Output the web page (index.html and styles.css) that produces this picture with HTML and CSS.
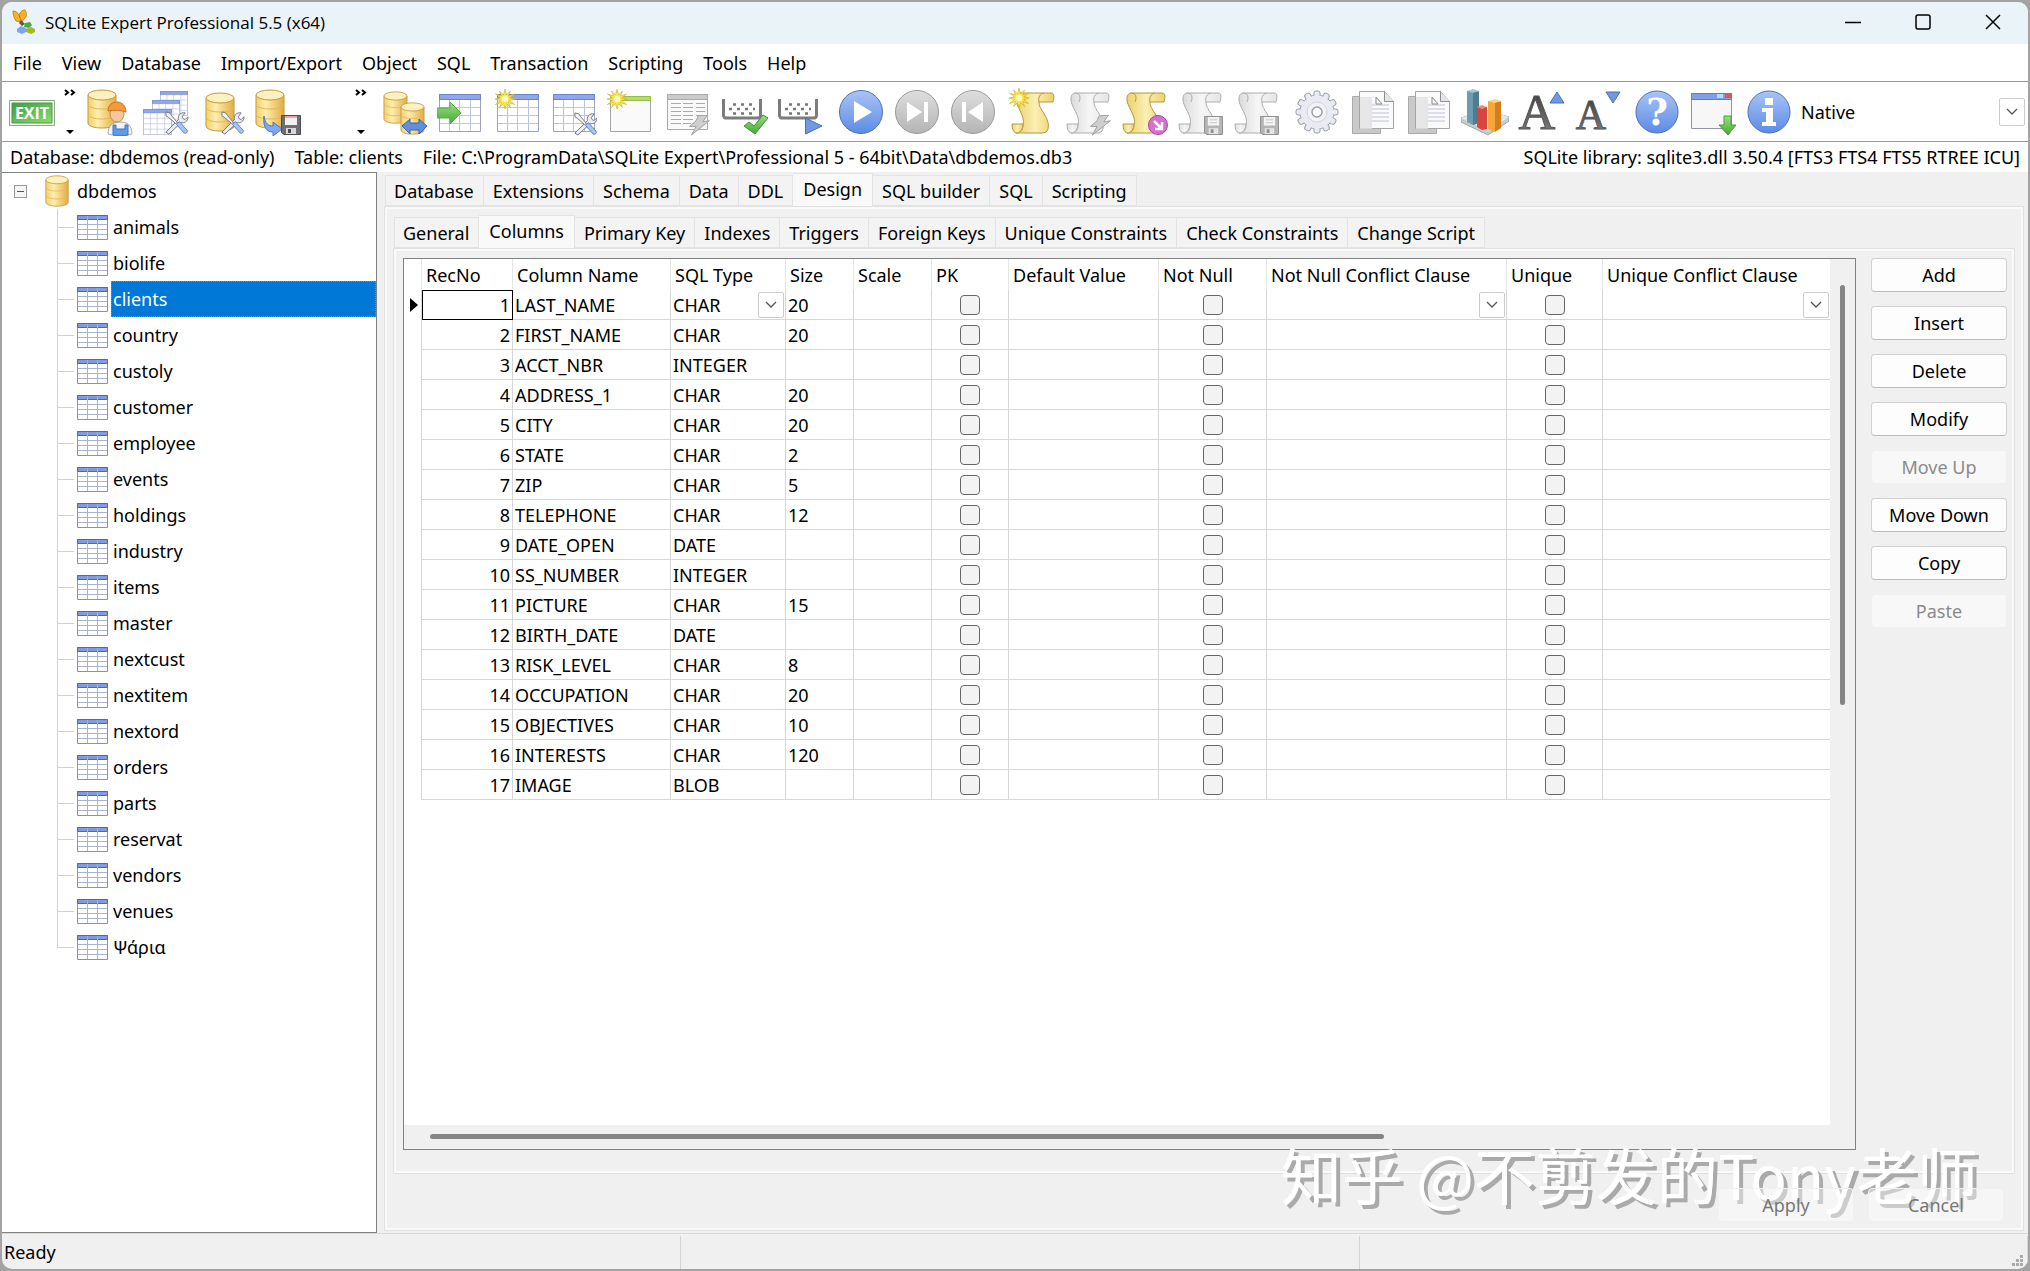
FILE: index.html
```html
<!DOCTYPE html>
<html lang="en">
<head>
    <meta charset="utf-8">
    <meta name="viewport" content="width=device-width, initial-scale=1">
    <title>SQLite Expert Professional 5.5 (x64)</title>
    <link rel="stylesheet" href="styles.css">
</head>
<body>
    <svg class="sprite" aria-hidden="true">
        <defs>
            <linearGradient id="gold"><stop offset="0" stop-color="#f3cf6b"/><stop offset=".35" stop-color="#fdeeb0"/><stop offset="1" stop-color="#e2ad3f"/></linearGradient>
            <linearGradient id="blue" x2="0" y2="1"><stop offset="0" stop-color="#a9c4f5"/><stop offset="1" stop-color="#5c8be6"/></linearGradient>
            <linearGradient id="gray" x2="0" y2="1"><stop offset="0" stop-color="#dedede"/><stop offset="1" stop-color="#b4b4b4"/></linearGradient>
            <linearGradient id="green" x2="0" y2="1"><stop offset="0" stop-color="#9be084"/><stop offset="1" stop-color="#46a835"/></linearGradient>
            <linearGradient id="exit" x2="1" y2="1"><stop offset="0" stop-color="#3f9d45"/><stop offset="1" stop-color="#8ddb70"/></linearGradient>
            <linearGradient id="paper"><stop offset="0" stop-color="#ecd068"/><stop offset=".5" stop-color="#fbf0b4"/><stop offset="1" stop-color="#edd168"/></linearGradient>
            <linearGradient id="paper-off"><stop offset="0" stop-color="#dcdcdc"/><stop offset=".5" stop-color="#f6f6f6"/><stop offset="1" stop-color="#e4e4e4"/></linearGradient>
            <linearGradient id="letter" x2="0" y2="1"><stop offset="0" stop-color="#333"/><stop offset="1" stop-color="#888"/></linearGradient>
        </defs>

        <!-- parts -->
        <symbol id="p-db" viewBox="0 0 30 40">
            <path d="M1 6v28c0 3 6 5 14 5s14-2 14-5V6z" fill="url(#gold)" stroke="#c4983f"/>
            <path d="M1 15c0 3 6 5 14 5s14-2 14-5M1 25c0 3 6 5 14 5s14-2 14-5" fill="none" stroke="#e3b95a"/>
            <ellipse cx="15" cy="6" rx="14" ry="5" fill="#fdf1c0" stroke="#c4983f"/>
        </symbol>
        <symbol id="p-table" viewBox="0 0 42 38">
            <path d="M.5.5h41v37H.5z" fill="#fff" stroke="#9ba3bd"/>
            <path d="M.5.5h41v5H.5z" fill="#8fa8ec" stroke="#6e83c4"/>
            <path d="M10.500 6v31M20.500 6v31M31.500 6v31M1 13.500h40M1 21.500h40M1 29.500h40" stroke="#bcc5e0"/>
        </symbol>
        <symbol id="p-tools" viewBox="0 0 26 26">
            <path d="M2 23l13-13c-1-4 2-8 7-7l-3 4 1 2 2 1 3-3c0 5-4 7-7 6L5 25z" fill="#e9ecf2" stroke="#71757f"/>
            <path d="M2 2l4 1 2 3 6 7-2 1-7-6-3-2z" fill="#f4f4f4" stroke="#71757f"/>
            <path d="M13 15l3-3 8 9c1 2-1 4-3 3z" fill="#a5c3f3" stroke="#5f80c0"/>
        </symbol>
        <symbol id="p-star" viewBox="0 0 20 20">
            <path d="M10 0l1.500 6 4-4-2 5 6-2-5 4 5.500 1-5.500 1.500 5 4-6-2 2 5-4-4L10 20l-1.500-5.500-4 4 2-5-6 2 5-4L0 10l5.500-1-5-4 6 2-2-5 4 4z" fill="#ffe94a" stroke="#d3b42d" stroke-width=".7"/>
            <circle cx="10" cy="10" r="3" fill="#fffbd0"/>
        </symbol>
        <symbol id="p-disk" viewBox="0 0 20 20">
            <path d="M.5.5h19v19H3l-2.500-2z" fill="#6d6d72" stroke="#4b4b50"/>
            <path d="M4 1h12v9H4z" fill="#f2f2f2"/><path d="M4 1h12v2H4z" fill="#e7a7a7"/>
            <path d="M5 13h10v6H5z" fill="#d8d8d8"/><path d="M7 14h3v4H7z" fill="#4b4b50"/>
        </symbol>
        <symbol id="p-disk-off" viewBox="0 0 20 20">
            <path d="M.5.5h19v19H3l-2.500-2z" fill="#b5b5b5" stroke="#8d8d8d"/>
            <path d="M4 1h12v9H4z" fill="#f4f4f4"/><path d="M6 4h8M6 7h8" stroke="#c8c8c8"/>
            <path d="M5 13h10v6H5z" fill="#e6e6e6"/><path d="M7 14h3v4H7z" fill="#8d8d8d"/>
        </symbol>
        <symbol id="p-bolt" viewBox="0 0 24 22">
            <path d="M11 1l10-1-5 7 7-1L4 21l5-9H2l7-6z" fill="#cfcfcf" stroke="#a0a0a0"/>
        </symbol>
        <symbol id="p-scroll" viewBox="0 0 44 42">
            <path d="M9 1h31c4 0 3 5 2 9H28c-1 7 12 16 9 27-1 3-3 4-6 4H5c4 0 7-3 7-8C15 24 4 14 5 6c0-3 2-5 4-5z"/>
            <path d="M9 1c5 0 6 4 4 9M28 10c-1-5 1-8 5-9" fill="none"/>
            <path d="M1 32h11c0 5-3 9-6 9s-5-3-5-9z"/>
        </symbol>
        <symbol id="p-basket" viewBox="0 0 40 24">
            <path d="M1.500 2v16c0 3 1 3 4 3h29c3 0 4 0 4-3V2" fill="none" stroke="#7c7c7c" stroke-width="3"/>
            <path d="M11 7.500h22M7 12h26M11 16.500h22" stroke="#777" stroke-width="2.500" stroke-dasharray="3 5"/>
        </symbol>
        <symbol id="p-pages" viewBox="0 0 48 48">
            <path d="M3.500 8.500h28v37h-28z" fill="#c9c9c9" stroke="#aaa"/>
            <path d="M10.500 3.500h25l9 10v27h-34z" fill="#fafafa" stroke="#a4a4a4"/>
            <path d="M35.500 3.500v10h9" fill="#e5e5e5" stroke="#8e8e8e"/>
            <path d="M22 17h18M22 21h18M22 25h18M22 29h18M22 33h18" stroke="#bcc2d8"/>
            <path d="M11 9h12v32H11z" fill="#e2e2e2" opacity=".8"/>
            <path d="M27 9l6 7h-6z" fill="#fff" stroke="#888"/>
        </symbol>
        <symbol id="p-chevron" viewBox="0 0 12 8"><path d="M1 1l5 5 5-5" fill="none" stroke="#555" stroke-width="1.300"/></symbol>

        <!-- toolbar icons -->
        <symbol id="i-db-user" viewBox="0 0 48 48">
            <use href="#p-db" x="0" y="1" width="32" height="40"/>
            <path d="M22 46c0-8 4-12 12-12s12 4 12 12c-6 2-18 2-24 0z" fill="#f3f3f3" stroke="#aaa"/>
            <path d="M27 47V37h3v4h9v-4h3v10c-4 1-11 1-15 0z" fill="#5b9bea" stroke="#3c78c6"/>
            <ellipse cx="31" cy="26" rx="7" ry="8" fill="#f3c69c" stroke="#c58e5c"/>
            <path d="M22 23c0-6 4-9 9-9s9 4 9 10c-5-2-12-2-18-1z" fill="#f2993a" stroke="#cd7420"/>
        </symbol>
        <symbol id="i-tables-tools" viewBox="0 0 48 48">
            <use href="#p-table" x="18" y="3" width="28" height="25" />
            <use href="#p-table" x="10" y="12" width="28" height="25"/>
            <use href="#p-table" x="1" y="21" width="29" height="26"/>
            <use href="#p-tools" x="22" y="22" width="25" height="25"/>
        </symbol>
        <symbol id="i-db-tools" viewBox="0 0 48 48">
            <use href="#p-db" x="6" y="4" width="32" height="40"/>
            <use href="#p-tools" x="22" y="22" width="25" height="25"/>
        </symbol>
        <symbol id="i-db-save" viewBox="0 0 48 48">
            <use href="#p-db" x="0" y="1" width="32" height="40"/>
            <path d="M10 28c1 8 5 10 9 10v-4l9 7-9 7v-4c-8 0-10-7-9-16z" fill="#7fa8ee" stroke="#4c74c2"/>
            <use href="#p-disk" x="27" y="27" width="20" height="20"/>
        </symbol>
        <symbol id="i-db-sync" viewBox="0 0 48 48">
            <use href="#p-db" x="2" y="3" width="25" height="33"/>
            <use href="#p-db" x="19" y="14" width="25" height="33"/>
            <path d="M21 38l8-7v4h9v-4l8 7-8 8v-4h-9v4z" fill="#5f90de" stroke="#3a65ae"/>
        </symbol>
        <symbol id="i-table-go" viewBox="0 0 48 48">
            <use href="#p-table" x="2" y="6" width="42" height="38"/>
            <path d="M0 20h13v-6l11 11-11 11v-6H0z" fill="url(#green)" stroke="#55a748"/>
        </symbol>
        <symbol id="i-table-new" viewBox="0 0 48 48">
            <use href="#p-table" x="4" y="6" width="42" height="38"/>
            <use href="#p-star" x="2" y="1" width="20" height="20"/>
        </symbol>
        <symbol id="i-table-tools" viewBox="0 0 48 48">
            <use href="#p-table" x="4" y="6" width="42" height="38"/>
            <use href="#p-tools" x="24" y="23" width="25" height="25"/>
        </symbol>
        <symbol id="i-view-new" viewBox="0 0 48 48">
            <path d="M5.500 8.500h40v35h-40z" fill="#fafafa" stroke="#a5a5a5"/>
            <path d="M5.500 8.500h40v4h-40z" fill="#b5dc68" stroke="#94be48"/>
            <use href="#p-star" x="2" y="1" width="20" height="20"/>
        </symbol>
        <symbol id="i-report" viewBox="0 0 48 48">
            <path d="M2.500 6.500h40v35h-40z" fill="#fafafa" stroke="#aaa"/>
            <path d="M2.500 6.500h40v5h-40z" fill="#cbcbcb" stroke="#aaa"/>
            <path d="M6 15.500h10M6 19.500h10M6 23.500h10M6 27.500h10M6 31.500h10M6 35.500h10M18 15.500h10M18 19.500h10M18 23.500h10M18 27.500h10M18 31.500h10M18 35.500h8M31 15.500h9M31 19.500h9M31 23.500h9M31 27.500h9" stroke="#aaa"/>
            <use href="#p-bolt" x="21" y="27" width="26" height="21"/>
        </symbol>
        <symbol id="i-basket-ok" viewBox="0 0 48 48">
            <use href="#p-basket" x="1" y="9" width="40" height="24"/>
            <path d="M23 38l5-4 5 4 9-11 5 3-13 16z" fill="url(#green)" stroke="#3f9331"/>
        </symbol>
        <symbol id="i-basket-run" viewBox="0 0 48 48">
            <use href="#p-basket" x="1" y="9" width="40" height="24"/>
            <path d="M28.500 30v16L45 38z" fill="#7199e2" stroke="#486fb9"/>
        </symbol>
        <symbol id="i-play" viewBox="0 0 48 48">
            <circle cx="24" cy="24" r="21.500" fill="url(#blue)" stroke="#5272ad"/>
            <path d="M17 13v22l18-11z" fill="#fff"/>
        </symbol>
        <symbol id="i-next" viewBox="0 0 48 48">
            <circle cx="24" cy="24" r="21.500" fill="url(#gray)" stroke="#9b9b9b"/>
            <path d="M14 14v20l15-10zM31 14h4v20h-4z" fill="#fff"/>
        </symbol>
        <symbol id="i-prev" viewBox="0 0 48 48">
            <circle cx="24" cy="24" r="21.500" fill="url(#gray)" stroke="#9b9b9b"/>
            <path d="M34 14v20L19 24zM13 14h4v20h-4z" fill="#fff"/>
        </symbol>
        <symbol id="i-script-new" viewBox="0 0 48 48">
            <use href="#p-scroll" x="2" y="4" width="44" height="42" fill="url(#paper)" stroke="#b2964a"/>
            <use href="#p-star" x="0" y="0" width="20" height="20"/>
        </symbol>
        <symbol id="i-script-run" viewBox="0 0 48 48">
            <use href="#p-scroll" x="1" y="4" width="44" height="42" fill="url(#paper-off)" stroke="#adadad"/>
            <use href="#p-bolt" x="23" y="27" width="24" height="21"/>
        </symbol>
        <symbol id="i-script-step" viewBox="0 0 48 48">
            <use href="#p-scroll" x="1" y="4" width="44" height="42" fill="url(#paper)" stroke="#b2964a"/>
            <circle cx="37" cy="37" r="9.500" fill="#d970cf" stroke="#a9449f"/>
            <path d="M33 33l7 7M41 34v7h-7" fill="none" stroke="#fff" stroke-width="2.500"/>
        </symbol>
        <symbol id="i-script-save" viewBox="0 0 48 48">
            <use href="#p-scroll" x="1" y="4" width="44" height="42" fill="url(#paper-off)" stroke="#adadad"/>
            <use href="#p-disk-off" x="27" y="28" width="19" height="19"/>
        </symbol>
        <symbol id="i-gear" viewBox="0 0 48 48">
            <g fill="#e8ebf1" stroke="#9a9fa9">
                <circle cx="24" cy="24" r="17"/>
                <rect x="21" y="3" width="6" height="42" rx="2"/>
                <rect x="21" y="3" width="6" height="42" rx="2" transform="rotate(30 24 24)"/>
                <rect x="21" y="3" width="6" height="42" rx="2" transform="rotate(60 24 24)"/>
                <rect x="21" y="3" width="6" height="42" rx="2" transform="rotate(90 24 24)"/>
                <rect x="21" y="3" width="6" height="42" rx="2" transform="rotate(120 24 24)"/>
                <rect x="21" y="3" width="6" height="42" rx="2" transform="rotate(150 24 24)"/>
            </g>
            <circle cx="24" cy="24" r="16.500" fill="#e8ebf1"/>
            <circle cx="24" cy="24" r="10" fill="#f1f3f7" stroke="#d0d4dd"/>
            <circle cx="24" cy="24" r="5" fill="#fff" stroke="#999ea8" stroke-width="1.500"/>
        </symbol>
        <symbol id="i-chart" viewBox="0 0 48 48">
            <path d="M0 34l27 13 21-14v-4L24 22 0 30z" fill="#c3cdd0" stroke="#9aa7ab"/>
            <path d="M0 30l27 13 21-14-24-8z" fill="#e3eaeb"/>
            <path d="M6 3h12v32l-6 2-6-3z" fill="#6f9bae"/><path d="M12 4h6v31l-6 2z" fill="#4f7c90"/><path d="M6 3l6-2 6 2-6 2z" fill="#a3c4d1"/>
            <path d="M16 19h10v22l-5 1-5-3z" fill="#d8453c"/><path d="M16 19l5-2 5 2-5 2z" fill="#ee8b80"/>
            <path d="M27 13h13v27l-7 4-6-3z" fill="#f4a73a"/><path d="M34 14h6v26l-6 4z" fill="#d67d1e"/><path d="M27 13l7-2 6 2-6 2z" fill="#fbd183"/>
        </symbol>
        <symbol id="i-window-down" viewBox="0 0 48 48">
            <path d="M2.500 5.500h40v35h-40z" fill="#f7f7f7" stroke="#8f95a5"/>
            <path d="M2.500 5.500h40v6h-40z" fill="#7fa0e6" stroke="#5f7fc4"/>
            <path d="M28 6h6v4h-6z" fill="#b7ddf4"/><path d="M36 6h6v4h-6z" fill="#e05a50"/>
            <path d="M35 28h7v9h5l-8 10-9-10h5z" fill="url(#green)" stroke="#4b9a3a"/>
        </symbol>
        <symbol id="i-info" viewBox="0 0 48 48">
            <circle cx="24" cy="24" r="21" fill="url(#blue)" stroke="#5272ad"/>
            <path d="M20 10h8v7h-8zM17 20h11v14h3v4H17v-4h4V24h-4z" fill="#fff"/>
        </symbol>
    </svg>

    <div class="window">
        <header class="titlebar">
            <svg class="app-icon" viewBox="0 0 24 26" aria-hidden="true">
                <path d="M1 2c3 0 5 2 6 4 1-3 3-5 6-5 2 3 2 7-1 9l-2 3-6-1C2 9 1 6 1 2z" fill="#f6b22f" stroke="#d08a12"/>
                <path d="M7 6l3 8" stroke="#b97708"/>
                <path d="M9 11l4 4-3 2-3-3z" fill="#5b5b52"/>
                <path d="M13 14l5-1 2 3-3 3-5-1z" fill="#4fa843"/>
                <path d="M5 20l4-3 5 2v4l-4 2-5-2z" fill="#7fa5ef"/>
                <path d="M14 20l5-2 4 2v3l-4 2-5-2z" fill="#a9b52a"/>
            </svg>
            <h1>SQLite Expert Professional 5.5 (x64)</h1>
            <div class="window-buttons">
                <button aria-label="Minimize"><svg viewBox="0 0 16 16"><path d="M0 8.500h16"/></svg></button>
                <button aria-label="Maximize"><svg viewBox="0 0 16 16"><rect x="1" y="1" width="14" height="14" rx="2"/></svg></button>
                <button aria-label="Close"><svg viewBox="0 0 16 16"><path d="M1 1l14 14M15 1L1 15"/></svg></button>
            </div>
        </header>

        <nav class="menubar">
            <button>File</button>
            <button>View</button>
            <button>Database</button>
            <button>Import/Export</button>
            <button>Object</button>
            <button>SQL</button>
            <button>Transaction</button>
            <button>Scripting</button>
            <button>Tools</button>
            <button>Help</button>
        </nav>

        <div class="toolbar">
            <div class="tool-group">
                <button aria-label="Exit">
                    <svg viewBox="0 0 48 48">
                        <path d="M1.500 12.500h45v25h-45z" fill="#f2f7f0" stroke="#8fa58c"/>
                        <path d="M4 15h40v20H4z" fill="url(#exit)" stroke="#4c9b44"/>
                        <text x="24" y="31" text-anchor="middle" class="exit-text">EXIT</text>
                    </svg>
                </button>
            </div>
            <button class="more" aria-label="More buttons">
                <svg viewBox="0 0 12 7"><path d="M1 1l3 2.500L1 6M7 1l3 2.500L7 6"/></svg>
                <svg viewBox="0 0 12 7"><path class="solid" d="M2 1h8L6 5z"/></svg>
            </button>
            <div class="tool-group">
                <button aria-label="Database administration"><svg><use href="#i-db-user"/></svg></button>
                <button aria-label="Repair tables"><svg><use href="#i-tables-tools"/></svg></button>
                <button aria-label="Database options"><svg><use href="#i-db-tools"/></svg></button>
                <button aria-label="Backup database"><svg><use href="#i-db-save"/></svg></button>
            </div>
            <button class="more more-end" aria-label="More buttons">
                <svg viewBox="0 0 12 7"><path d="M1 1l3 2.500L1 6M7 1l3 2.500L7 6"/></svg>
                <svg viewBox="0 0 12 7"><path class="solid" d="M2 1h8L6 5z"/></svg>
            </button>
            <div class="tool-group">
                <button aria-label="Transfer data"><svg><use href="#i-db-sync"/></svg></button>
                <button aria-label="Import"><svg><use href="#i-table-go"/></svg></button>
                <button aria-label="New table"><svg><use href="#i-table-new"/></svg></button>
                <button aria-label="Design table"><svg><use href="#i-table-tools"/></svg></button>
                <button aria-label="New view"><svg><use href="#i-view-new"/></svg></button>
            </div>
            <div class="tool-group">
                <button aria-label="Quick report" disabled><svg><use href="#i-report"/></svg></button>
                <button aria-label="Commit"><svg><use href="#i-basket-ok"/></svg></button>
                <button aria-label="Begin transaction"><svg><use href="#i-basket-run"/></svg></button>
            </div>
            <div class="tool-group">
                <button aria-label="Execute"><svg><use href="#i-play"/></svg></button>
                <button aria-label="Execute next" disabled><svg><use href="#i-next"/></svg></button>
                <button aria-label="Execute previous" disabled><svg><use href="#i-prev"/></svg></button>
            </div>
            <div class="tool-group">
                <button aria-label="New script"><svg><use href="#i-script-new"/></svg></button>
                <button aria-label="Run script" disabled><svg><use href="#i-script-run"/></svg></button>
                <button aria-label="Step into script"><svg><use href="#i-script-step"/></svg></button>
                <button aria-label="Save script" disabled><svg><use href="#i-script-save"/></svg></button>
                <button aria-label="Save script as" disabled><svg><use href="#i-script-save"/></svg></button>
            </div>
            <div class="tool-group">
                <button aria-label="Options"><svg><use href="#i-gear"/></svg></button>
                <button aria-label="Copy" disabled><svg><use href="#p-pages"/></svg></button>
                <button aria-label="Copy all" disabled><svg><use href="#p-pages"/></svg></button>
                <button aria-label="Chart"><svg><use href="#i-chart"/></svg></button>
                <button aria-label="Increase font">
                    <svg viewBox="0 0 48 48">
                        <text x="20" y="41" text-anchor="middle" class="letter" font-size="51">A</text>
                        <path d="M40 4l7 11H33z" fill="#7199e2" stroke="#486fb9"/>
                    </svg>
                </button>
                <button aria-label="Decrease font">
                    <svg viewBox="0 0 48 48">
                        <text x="18" y="41" text-anchor="middle" class="letter" font-size="42">A</text>
                        <path d="M40 15L33 4h14z" fill="#7199e2" stroke="#486fb9"/>
                    </svg>
                </button>
            </div>
            <div class="tool-group">
                <button aria-label="Help">
                    <svg viewBox="0 0 48 48">
                        <circle cx="24" cy="24" r="21" fill="url(#blue)" stroke="#5272ad"/>
                        <text x="24" y="37" text-anchor="middle" class="badge">?</text>
                    </svg>
                </button>
                <button aria-label="Check for updates"><svg><use href="#i-window-down"/></svg></button>
                <button aria-label="About"><svg><use href="#i-info"/></svg></button>
            </div>
            <label class="combo theme">
                <select aria-label="Theme"><option>Native</option></select>
                <span class="arrow"><svg><use href="#p-chevron"/></svg></span>
            </label>
        </div>

        <div class="infobar">
            <span>Database: dbdemos (read-only)</span>
            <span>Table: clients</span>
            <span>File: C:\ProgramData\SQLite Expert\Professional 5 - 64bit\Data\dbdemos.db3</span>
            <span class="library">SQLite library: sqlite3.dll 3.50.4 [FTS3 FTS4 FTS5 RTREE ICU]</span>
        </div>

        <div class="workspace">
            <aside class="tree">
                <div class="tree-root">
                    <button class="collapse" aria-label="Collapse dbdemos"></button>
                    <svg><use href="#p-db"/></svg>
                    <span>dbdemos</span>
                </div>
                <ul id="tables"></ul>
            </aside>

            <main class="main">
                <div class="tabs" role="tablist">
                    <button role="tab">Database</button>
                    <button role="tab">Extensions</button>
                    <button role="tab">Schema</button>
                    <button role="tab">Data</button>
                    <button role="tab">DDL</button>
                    <button role="tab" class="active">Design</button>
                    <button role="tab">SQL builder</button>
                    <button role="tab">SQL</button>
                    <button role="tab">Scripting</button>
                </div>
                <section class="page">
                    <div class="tabs" role="tablist">
                        <button role="tab">General</button>
                        <button role="tab" class="active">Columns</button>
                        <button role="tab">Primary Key</button>
                        <button role="tab">Indexes</button>
                        <button role="tab">Triggers</button>
                        <button role="tab">Foreign Keys</button>
                        <button role="tab">Unique Constraints</button>
                        <button role="tab">Check Constraints</button>
                        <button role="tab">Change Script</button>
                    </div>
                    <section class="page page-columns">
                        <div class="grid">
                            <div class="grid-view">
                                <table>
                                    <colgroup>
                                        <col class="w-mark"><col class="w-recno"><col class="w-name"><col class="w-type">
                                        <col class="w-size"><col class="w-scale"><col class="w-pk"><col class="w-default">
                                        <col class="w-notnull"><col class="w-conflict"><col class="w-unique"><col>
                                    </colgroup>
                                    <thead>
                                        <tr>
                                            <th></th><th>RecNo</th><th>Column Name</th><th>SQL Type</th><th>Size</th><th>Scale</th>
                                            <th>PK</th><th>Default Value</th><th>Not Null</th><th>Not Null Conflict Clause</th>
                                            <th>Unique</th><th>Unique Conflict Clause</th>
                                        </tr>
                                    </thead>
                                    <tbody id="columns"></tbody>
                                </table>
                            </div>
                            <div class="vscroll"><div class="thumb"></div></div>
                            <div class="hscroll"><div class="thumb"></div></div>
                        </div>
                        <div class="actions">
                            <button>Add</button>
                            <button>Insert</button>
                            <button>Delete</button>
                            <button>Modify</button>
                            <button disabled>Move Up</button>
                            <button>Move Down</button>
                            <button>Copy</button>
                            <button disabled>Paste</button>
                        </div>
                    </section>
                    <div class="actions footer">
                        <button disabled>Apply</button>
                        <button disabled>Cancel</button>
                    </div>
                </section>
            </main>
        </div>

        <footer class="statusbar">
            <span>Ready</span>
            <span></span>
            <span></span>
            <svg class="grip" viewBox="0 0 12 12"><path d="M8 0h3v3H8zM4 4h3v3H4zM8 4h3v3H8zM0 8h3v3H0zM4 8h3v3H4zM8 8h3v3H8z"/></svg>
        </footer>
        <div class="watermark">知乎 @不剪发的Tony老师</div>
    </div>

    <script src="app.js"></script>
</body>
</html>
```

FILE: styles.css
```css
* {
    box-sizing: border-box;
}
body {
    margin: 0;
    height: 100vh;
    padding: 2px;
    background: #a3a3a3;
    font-family: "Noto Sans", "Open Sans", sans-serif;
    font-size: 18px;
    color: #000;
}
button, select {
    font: inherit;
    color: inherit;
    border: none;
    background: none;
    padding: 0;
}
.sprite {
    position: absolute;
    width: 0;
    height: 0;
}
.window {
    position: relative;
    display: flex;
    flex-direction: column;
    height: 100%;
    background: #f0f0f0;
    border-radius: 10px;
    overflow: hidden;
}

/* title and menu */
.titlebar {
    display: flex;
    align-items: center;
    height: 42px;
    flex: none;
    padding: 0 0 2px 10px;
    background: #eaf3f8;
}
.titlebar h1 {
    margin: 0 auto 0 9px;
    font-family: "Open Sans", sans-serif;
    font-size: 17px;
    font-weight: normal;
}
.app-icon {
    width: 24px;
    height: 26px;
}
.window-buttons {
    display: flex;
}
.window-buttons button {
    display: flex;
    align-items: center;
    justify-content: center;
    width: 70px;
    height: 40px;
}
.window-buttons svg {
    width: 16px;
    height: 16px;
    fill: none;
    stroke: #000;
    stroke-width: 1.5;
}
.menubar {
    display: flex;
    gap: 20px;
    height: 38px;
    flex: none;
    padding: 0 11px;
    background: #fff;
    border-bottom: 1px solid #999;
}

/* toolbar */
.toolbar {
    display: flex;
    align-items: center;
    height: 60px;
    flex: none;
    padding: 0 2px;
    background: #fff;
    border-bottom: 1px solid #999;
}
.tool-group {
    display: flex;
    margin-right: 4px;
}
.tool-group button {
    width: 56px;
    height: 52px;
    display: flex;
    align-items: center;
    justify-content: center;
}
.tool-group svg {
    width: 48px;
    height: 48px;
    overflow: visible;
}
.more {
    display: flex;
    flex-direction: column;
    justify-content: space-between;
    width: 18px;
    height: 48px;
    padding: 1px 0 0;
}
.more-end {
    margin-left: 45px;
    width: 22px;
}
.more svg {
    width: 12px;
    height: 7px;
    fill: none;
    stroke: #000;
    stroke-width: 2;
}
.more .solid {
    fill: #000;
    stroke: none;
}
.exit-text {
    font: bold 16px "Open Sans", sans-serif;
    fill: #fff;
}
.letter {
    font-family: "Liberation Serif", serif;
    fill: url(#letter);
    stroke: #555;
}
.badge {
    font: bold 37px "DejaVu Serif", serif;
    fill: #fff;
}
.combo {
    position: relative;
    display: flex;
    align-items: center;
}
.combo select {
    flex: 1;
    min-width: 0;
    height: 28px;
    appearance: none;
}
.arrow {
    position: absolute;
    right: 1px;
    top: 1px;
    bottom: 1px;
    width: 26px;
    display: flex;
    align-items: center;
    justify-content: center;
    background: #fff;
    border: 1px solid #ccc;
    border-radius: 2px;
    pointer-events: none;
}
.arrow svg {
    width: 12px;
    height: 8px;
}
.theme {
    flex: 1;
    height: 30px;
}

.infobar {
    display: flex;
    gap: 20px;
    height: 30px;
    line-height: 30px;
    flex: none;
    padding: 0 8px;
    background: #fff;
    white-space: nowrap;
}
.library {
    margin-left: auto;
}

/* table tree */
.workspace {
    display: flex;
    flex: 1;
    min-height: 0;
}
.tree {
    width: 375px;
    flex: none;
    background: #fff;
    border: 1px solid #828282;
    border-left: none;
}
.tree-root {
    display: flex;
    align-items: center;
    height: 36px;
    padding-left: 12px;
}
.tree-root svg {
    width: 24px;
    height: 32px;
    margin: 0 8px 0 18px;
}
.collapse {
    width: 13px;
    height: 13px;
    border: 1px solid #999;
    background: linear-gradient(#47596f, #47596f) center / 7px 1px no-repeat #f5f5f5;
}
.tree ul {
    list-style: none;
    margin: 0;
    padding: 0 0 0 55px;
}
.tree li {
    display: flex;
    align-items: center;
    height: 36px;
}
.branch {
    width: 20px;
    height: 36px;
    background: linear-gradient(#d0d0d0, #d0d0d0) 0 0 / 1px 100% no-repeat, linear-gradient(#d0d0d0, #d0d0d0) 0 50% / 17px 1px no-repeat;
}
.tree li:last-child .branch {
    background-size: 1px 50%, 17px 1px;
}
.tree li svg {
    width: 31px;
    height: 25px;
    margin-right: 3px;
}
.tree li .name {
    flex: 1;
    height: 36px;
    line-height: 36px;
    padding-left: 2px;
}
.tree li.selected .name {
    background: #0078d7;
    color: #fff;
    outline: 1px dotted #c77a2a;
    outline-offset: -1px;
}

/* tabs */
.main {
    display: flex;
    flex-direction: column;
    flex: 1;
    min-width: 0;
    padding: 1px 4px 2px 7px;
}
.tabs {
    display: flex;
    align-items: flex-end;
    height: 33px;
    flex: none;
}
.tabs button {
    height: 31px;
    padding: 0 9px;
    white-space: nowrap;
    background: #f3f3f3;
    border: 1px solid #e3e3e3;
    border-left: none;
}
.tabs button:first-child {
    margin-left: 1px;
    padding-left: 8px;
    border-left: 1px solid #e3e3e3;
}
.tabs button.active {
    height: 34px;
    padding: 0 10px 4px;
    margin-bottom: -1px;
    background: #f9f9f9;
    border-bottom: none;
}
.page {
    flex: 1;
    min-height: 0;
    display: flex;
    flex-direction: column;
    padding: 8px;
    border: 1px solid #e0e0e0;
    box-shadow: inset 0 0 0 2px #f9f9f9;
}
.page-columns {
    flex-direction: row;
    gap: 15px;
    padding: 9px 7px 23px 9px;
}

/* column grid */
.grid {
    flex: 1;
    min-width: 0;
    display: grid;
    grid-template-columns: 1fr 25px;
    grid-template-rows: 1fr 24px;
    border: 1px solid #828282;
}
.grid-view {
    background: #fff;
    overflow: hidden;
}
.vscroll {
    padding: 26px 0 0 10px;
}
.vscroll .thumb {
    width: 5px;
    height: 50%;
    background: #858585;
    border-radius: 3px;
}
.hscroll {
    padding: 9px 17px 0 26px;
}
.hscroll .thumb {
    width: 69%;
    height: 5px;
    background: #858585;
    border-radius: 3px;
}
table {
    width: 100%;
    table-layout: fixed;
    border-collapse: separate;
    border-spacing: 0;
}
.w-mark { width: 18px; }
.w-recno { width: 91px; }
.w-name { width: 158px; }
.w-type { width: 115px; }
.w-size { width: 68px; }
.w-scale { width: 78px; }
.w-pk { width: 77px; }
.w-default { width: 150px; }
.w-notnull { width: 108px; }
.w-conflict { width: 240px; }
.w-unique { width: 96px; }
th, td {
    padding: 0 0 0 2px;
    text-align: left;
    font-weight: normal;
    white-space: nowrap;
    border-right: 1px solid #d6d6d6;
}
th {
    height: 31px;
    padding: 0 0 0 4px;
    border-color: #e6e6e6;
}
td {
    height: 30px;
    line-height: 28px;
    border-bottom: 1px solid #d6d6d6;
}
th:last-child, td:last-child {
    border-right: none;
}
td.mark {
    border-bottom: none;
    padding-left: 6px;
}
.mark svg {
    display: block;
    width: 8px;
    height: 18px;
}
td.recno {
    text-align: right;
    padding-right: 2px;
}
tr.current .recno {
    outline: 1px solid #000;
    outline-offset: -1px;
}
td.check {
    text-align: center;
    padding: 0;
}
td.check input {
    display: block;
    appearance: none;
    width: 20px;
    height: 20px;
    margin: 0 auto;
    background: #f3f3f3;
    border: 1px solid #666;
    border-radius: 4px;
}

/* buttons */
.actions {
    display: flex;
    flex-direction: column;
    gap: 14px;
    flex: none;
}
.actions button {
    width: 136px;
    height: 34px;
    line-height: 30px;
    background: #fdfdfd;
    border: 1px solid #d0d0d0;
    border-bottom-color: #bbb;
    border-radius: 4px;
}
.actions button:disabled {
    color: #8b8b8b;
    background: #f8f8f8;
    border-color: #f0f0f0;
}
.footer {
    position: relative;
    z-index: 1;
    flex-direction: row;
    justify-content: flex-end;
    padding: 14px 11px 0 0;
}
.actions.footer button {
    color: #777;
    background: rgba(255, 255, 255, 0.4);
}

.statusbar {
    position: relative;
    display: grid;
    grid-template-columns: 679px 679px 1fr;
    height: 36px;
    flex: none;
    padding-top: 2px;
    border-top: 1px solid #d8d8d8;
}
.statusbar span {
    padding-left: 2px;
    line-height: 32px;
    border-right: 1px solid #d4d4d4;
}
.grip {
    position: absolute;
    right: 4px;
    bottom: 2px;
    width: 12px;
    height: 12px;
    fill: #aaa;
}
.watermark {
    position: absolute;
    right: 50px;
    bottom: 50px;
    font-family: "Noto Sans CJK SC", sans-serif;
    font-size: 61px;
    line-height: 90px;
    white-space: nowrap;
    color: #fff;
    text-shadow: 4px 4px 0 #aaa;
    pointer-events: none;
}
```

FILE: app.js
```js
const tables = ["animals", "biolife", "clients", "country", "custoly", "customer", "employee",
    "events", "holdings", "industry", "items", "master", "nextcust", "nextitem", "nextord",
    "orders", "parts", "reservat", "vendors", "venues", "Ψάρια"];

const columns = [
    ["LAST_NAME", "CHAR", "20"],
    ["FIRST_NAME", "CHAR", "20"],
    ["ACCT_NBR", "INTEGER", ""],
    ["ADDRESS_1", "CHAR", "20"],
    ["CITY", "CHAR", "20"],
    ["STATE", "CHAR", "2"],
    ["ZIP", "CHAR", "5"],
    ["TELEPHONE", "CHAR", "12"],
    ["DATE_OPEN", "DATE", ""],
    ["SS_NUMBER", "INTEGER", ""],
    ["PICTURE", "CHAR", "15"],
    ["BIRTH_DATE", "DATE", ""],
    ["RISK_LEVEL", "CHAR", "8"],
    ["OCCUPATION", "CHAR", "20"],
    ["OBJECTIVES", "CHAR", "10"],
    ["INTERESTS", "CHAR", "120"],
    ["IMAGE", "BLOB", ""]
];

document.getElementById("tables").innerHTML = tables.map(name => `
    <li class="${name === "clients" ? "selected" : ""}">
        <span class="branch"></span>
        <svg viewBox="0 0 31 25">
            <path d="M.5.5h30v24H.5z" fill="#fff" stroke="#8b93a8"/>
            <path d="M.5.5h30v4H.5z" fill="#8099e0" stroke="#5068b4"/>
            <path d="M10.500 1v23M20.500 1v23M1 9.500h29M1 14.500h29M1 19.500h29" stroke="#a9b3cf"/>
        </svg>
        <span class="name">${name}</span>
    </li>`).join("");

function combo(label, value) {
    return `<label class="combo">
        <select aria-label="${label}"><option>${value}</option></select>
        <span class="arrow"><svg><use href="#p-chevron"/></svg></span>
    </label>`;
}

function check(label) {
    return `<td class="check"><input type="checkbox" aria-label="${label}"></td>`;
}

// Only the current row shows its editors
document.getElementById("columns").innerHTML = columns.map(([name, type, size], i) => {
    const current = i === 0;
    return `<tr class="${current ? "current" : ""}">
        <td class="mark">${current ? '<svg viewBox="0 0 8 18"><path d="M0 2l8 7-8 7z"/></svg>' : ""}</td>
        <td class="recno">${i + 1}</td>
        <td>${name}</td>
        <td>${current ? combo("SQL Type", type) : type}</td>
        <td>${size}</td>
        <td></td>
        ${check("PK " + name)}
        <td></td>
        ${check("Not Null " + name)}
        <td>${current ? combo("Not Null Conflict Clause", "") : ""}</td>
        ${check("Unique " + name)}
        <td>${current ? combo("Unique Conflict Clause", "") : ""}</td>
    </tr>`;
}).join("");
```
